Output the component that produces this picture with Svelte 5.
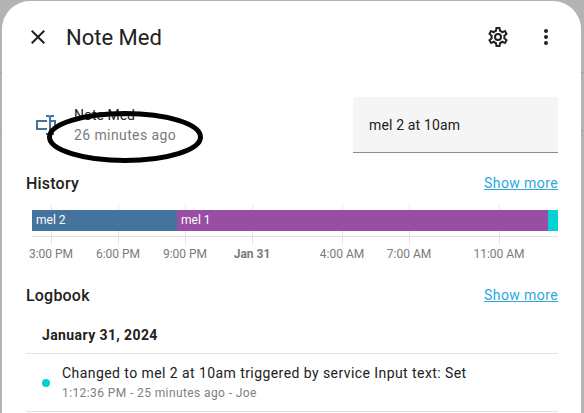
<script>
  const ticks = [
    { label: '3:00 PM', x: 51 },
    { label: '6:00 PM', x: 118 },
    { label: '9:00 PM', x: 185 },
    { label: 'Jan 31', x: 252, bold: true },
    { label: '4:00 AM', x: 342 },
    { label: '7:00 AM', x: 409 },
    { label: '11:00 AM', x: 499 }
  ];
</script>

<div class="page">
  <div class="dialog">
    <header class="topbar">
      <svg class="icon close" viewBox="0 0 24 24" width="24" height="24">
        <path d="M19,6.41L17.59,5L12,10.59L6.41,5L5,6.41L10.59,12L5,17.59L6.41,19L12,13.41L17.59,19L19,17.59L13.41,12L19,6.41Z" />
      </svg>
      <h1>Note Med</h1>
      <svg class="icon gear" viewBox="0 0 24 24" width="24" height="24">
        <path d="M12,8A4,4 0 0,1 16,12A4,4 0 0,1 12,16A4,4 0 0,1 8,12A4,4 0 0,1 12,8M12,10A2,2 0 0,0 10,12A2,2 0 0,0 12,14A2,2 0 0,0 14,12A2,2 0 0,0 12,10M10,22C9.75,22 9.54,21.82 9.5,21.58L9.13,18.93C8.5,18.68 7.96,18.34 7.44,17.94L4.95,18.95C4.73,19.03 4.46,18.95 4.34,18.73L2.34,15.27C2.21,15.05 2.27,14.78 2.46,14.63L4.57,12.97L4.5,12L4.57,11L2.46,9.37C2.27,9.22 2.21,8.95 2.34,8.73L4.34,5.27C4.46,5.05 4.73,4.96 4.95,5.05L7.44,6.05C7.96,5.66 8.5,5.32 9.13,5.07L9.5,2.42C9.54,2.18 9.75,2 10,2H14C14.25,2 14.46,2.18 14.5,2.42L14.87,5.07C15.5,5.32 16.04,5.66 16.56,6.05L19.05,5.05C19.27,4.96 19.54,5.05 19.66,5.27L21.66,8.73C21.79,8.95 21.73,9.22 21.54,9.37L19.43,11L19.5,12L19.43,13L21.54,14.63C21.73,14.78 21.79,15.05 21.66,15.27L19.66,18.73C19.54,18.95 19.27,19.04 19.05,18.95L16.56,17.95C16.04,18.34 15.5,18.68 14.87,18.93L14.5,21.58C14.46,21.82 14.25,22 14,22H10M11.25,4L10.88,6.61C9.68,6.86 8.62,7.5 7.85,8.39L5.44,7.35L4.69,8.65L6.8,10.2C6.4,11.37 6.4,12.64 6.8,13.8L4.68,15.36L5.43,16.66L7.86,15.62C8.63,16.5 9.68,17.14 10.87,17.38L11.24,20H12.76L13.13,17.39C14.32,17.14 15.37,16.5 16.14,15.62L18.57,16.66L19.32,15.36L17.2,13.81C17.6,12.64 17.6,11.37 17.2,10.2L19.31,8.65L18.56,7.35L16.15,8.39C15.38,7.5 14.32,6.86 13.12,6.62L12.75,4H11.25Z" />
      </svg>
      <svg class="icon dots" viewBox="0 0 24 24" width="24" height="24">
        <path d="M12,16A2,2 0 0,1 14,18A2,2 0 0,1 12,20A2,2 0 0,1 10,18A2,2 0 0,1 12,16M12,10A2,2 0 0,1 14,12A2,2 0 0,1 12,14A2,2 0 0,1 10,12A2,2 0 0,1 12,10M12,4A2,2 0 0,1 14,6A2,2 0 0,1 12,8A2,2 0 0,1 10,6A2,2 0 0,1 12,4Z" />
      </svg>
    </header>

    <section class="state-row">
      <svg class="entity-icon" viewBox="0 0 24 24" width="24" height="24">
        <path d="M17,7H22V17H17V19A1,1 0 0,0 18,20H20V22H17.5C16.95,22 16,21.55 16,21C16,21.55 15.05,22 14.5,22H12V20H14A1,1 0 0,0 15,19V5A1,1 0 0,0 14,4H12V2H14.5C15.05,2 16,2.45 16,3C16,2.45 16.95,2 17.5,2H20V4H18A1,1 0 0,0 17,5V7M2,7H13V9H4V15H13V17H2V7M20,15V9H17V15H20Z" />
      </svg>
      <div class="state-text">
        <div class="name">Note Med</div>
        <div class="ago">26 minutes ago</div>
      </div>
      <div class="field">mel 2 at 10am</div>
    </section>

    <div class="section-head history-head">
      <h2>History</h2>
      <span class="more">Show more</span>
    </div>

    <div class="timeline">
      <div class="bar">
        <div class="seg blue">mel 2</div>
        <div class="seg purple">mel 1</div>
        <div class="seg cyan"></div>
      </div>
      <div class="axis"></div>
      {#each ticks as t}
        <span class="grid" style="left: {t.x - 32}px"></span>
        <span class="tick" class:bold={t.bold} style="left: {t.x - 32}px">{t.label}</span>
      {/each}
    </div>

    <div class="section-head logbook-head">
      <h2>Logbook</h2>
      <span class="more">Show more</span>
    </div>

    <div class="date">January 31, 2024</div>
    <div class="entry">
      <span class="dot"></span>
      <div>
        <div class="msg">Changed to mel 2 at 10am triggered by service Input text: Set</div>
        <div class="meta">1:12:36 PM - 25 minutes ago - Joe</div>
      </div>
    </div>

    <svg class="scribble" viewBox="0 0 160 56" width="160" height="56">
      <ellipse cx="80" cy="28" rx="75.5" ry="23.5" />
    </svg>
  </div>
</div>

<style>
  :global(body) {
    margin: 0;
    overflow: hidden;
  }
  .page {
    width: 584px;
    height: 413px;
    overflow: hidden;
    padding: 1px 0 0 2px;
    box-sizing: border-box;
    font-family: Roboto, sans-serif;
    background:
      linear-gradient(#a4a4a4, #a4a4a4) 0 72px / 100% 1px no-repeat,
      linear-gradient(#a4a4a4, #a4a4a4) 0 130px / 100% 1px no-repeat,
      #b3b3b3;
  }
  .dialog {
    position: relative;
    width: 579px;
    height: 440px;
    background: #fff;
    border-radius: 28px;
    padding: 0 23px 0 24px;
    box-sizing: border-box;
    color: #212121;
  }
  .topbar {
    display: flex;
    align-items: center;
    height: 72px;
  }
  .icon {
    fill: #212121;
    flex: none;
  }
  h1 {
    flex: 1;
    margin: 0 0 0 16px;
    font-size: 22px;
    font-weight: 400;
  }
  .gear {
    margin-right: 24px;
  }
  .state-row {
    display: flex;
    align-items: center;
    height: 56px;
    margin-top: 24px;
    padding-left: 8px;
  }
  .entity-icon {
    fill: #44739e;
    flex: none;
  }
  .state-text {
    flex: 1;
    margin-left: 16px;
    line-height: 20px;
  }
  .name {
    font-size: 14px;
  }
  .ago {
    font-size: 14px;
    letter-spacing: 0.4px;
    color: #7b7b7b;
  }
  .field {
    width: 205px;
    height: 56px;
    box-sizing: border-box;
    display: flex;
    align-items: center;
    padding-left: 16px;
    background: #f5f5f5;
    border-bottom: 1px solid #8c8c8c;
    border-radius: 4px 4px 0 0;
    font-size: 14px;
    letter-spacing: 0.15px;
  }
  .section-head {
    display: flex;
    justify-content: space-between;
    align-items: center;
    height: 20px;
  }
  .history-head {
    margin-top: 20px;
  }
  .logbook-head {
    margin-top: 20px;
  }
  h2 {
    margin: 0;
    font-size: 16px;
    font-weight: 500;
    letter-spacing: 0.2px;
  }
  .more {
    font-size: 14px;
    color: #2aa8df;
    text-decoration: underline;
    letter-spacing: 0.4px;
  }
  .timeline {
    position: relative;
    height: 60px;
    margin-top: 12px;
    margin-left: 6px;
  }
  .bar {
    display: flex;
    height: 21px;
    position: relative;
    top: 5px;
    z-index: 1;
  }
  .seg {
    color: #fff;
    font-size: 12px;
    line-height: 20px;
    padding-left: 4px;
    box-sizing: border-box;
  }
  .blue {
    width: 145px;
    background: #44739e;
  }
  .purple {
    flex: 1;
    background: #984ea3;
  }
  .cyan {
    width: 10px;
    padding: 0;
    background: #00d2d5;
  }
  .axis {
    position: absolute;
    top: 31px;
    left: 0;
    right: 0;
    border-top: 1px solid #e0e0e0;
  }
  .grid {
    position: absolute;
    top: 0;
    height: 40px;
    border-left: 1px solid #e4e4e4;
  }
  .tick {
    position: absolute;
    top: 42px;
    transform: translateX(-50%);
    font-size: 12px;
    line-height: 14px;
    color: #7a7a7a;
    white-space: nowrap;
  }
  .bold {
    font-weight: 700;
  }
  .date {
    height: 37px;
    display: flex;
    align-items: center;
    padding-left: 16px;
    padding-top: 6px;
    margin-top: 5px;
    border-bottom: 1px solid #e0e0e0;
    font-size: 14px;
    font-weight: 700;
    letter-spacing: 0.4px;
  }
  .entry {
    display: flex;
    align-items: center;
    height: 57px;
    border-bottom: 1px solid #e0e0e0;
  }
  .dot {
    width: 8px;
    height: 8px;
    border-radius: 50%;
    background: #00d2d5;
    margin: 0 12px 0 16px;
    flex: none;
  }
  .msg {
    font-size: 14px;
    letter-spacing: 0.43px;
    line-height: 20px;
  }
  .meta {
    font-size: 12px;
    letter-spacing: 0.4px;
    line-height: 20px;
    color: #808080;
  }
  .scribble {
    position: absolute;
    left: 43px;
    top: 108px;
    z-index: 2;
  }
  .scribble ellipse {
    fill: none;
    stroke: #000;
    stroke-width: 5;
  }
</style>
